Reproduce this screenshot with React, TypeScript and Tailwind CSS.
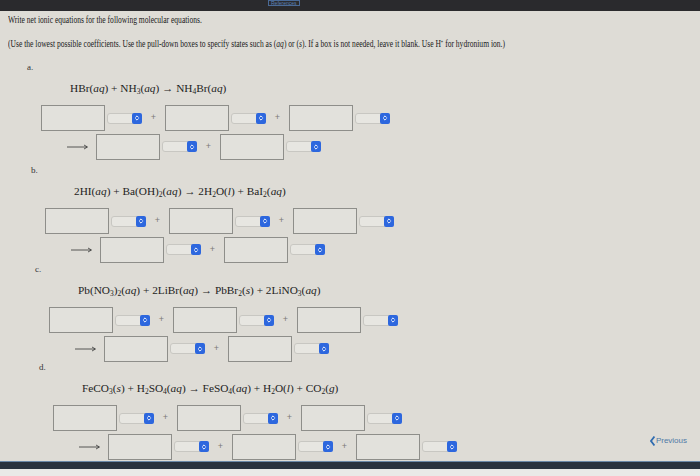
import React from "react";

const serif = "font-['Liberation_Serif','Times_New_Roman',serif]";

type Part = string | { sub: string } | { st: string };

const sections: { label: string; eq: Part[]; pad: string; gap: string }[] = [
  {
    label: "a.",
    pad: "pl-0",
    gap: "mt-0",
    eq: ["HBr", { st: "aq" }, " + NH", { sub: "3" }, { st: "aq" }, " → ", "NH", { sub: "4" }, "Br", { st: "aq" }],
  },
  {
    label: "b.",
    pad: "pl-[4px]",
    gap: "mt-[5px]",
    eq: [
      "2HI", { st: "aq" }, " + Ba(OH)", { sub: "2" }, { st: "aq" }, " → ", "2H", { sub: "2" }, "O", { st: "l" },
      " + BaI", { sub: "2" }, { st: "aq" },
    ],
  },
  {
    label: "c.",
    pad: "pl-[8px]",
    gap: "mt-[1px]",
    eq: [
      "Pb(NO", { sub: "3" }, ")", { sub: "2" }, { st: "aq" }, " + 2LiBr", { st: "aq" }, " → ", "PbBr", { sub: "2" },
      { st: "s" }, " + 2LiNO", { sub: "3" }, { st: "aq" },
    ],
  },
  {
    label: "d.",
    pad: "pl-[12px]",
    gap: "mt-0",
    eq: [
      "FeCO", { sub: "3" }, { st: "s" }, " + H", { sub: "2" }, "SO", { sub: "4" }, { st: "aq" }, " → ", "FeSO",
      { sub: "4" }, { st: "aq" }, " + H", { sub: "2" }, "O", { st: "l" }, " + CO", { sub: "2" }, { st: "g" },
    ],
  },
];

function Equation({ parts }: { parts: Part[] }) {
  return (
    <div className={`${serif} h-[14px] text-[11.3px] leading-[14px] text-[#222] whitespace-pre`}>
      {parts.map((p, i) => {
        if (typeof p === "string") return <span key={i}>{p}</span>;
        if ("sub" in p)
          return (
            <span key={i} className="relative top-[2px] text-[7.5px]">
              {p.sub}
            </span>
          );
        return (
          <span key={i}>
            (<span className="italic">{p.st}</span>)
          </span>
        );
      })}
    </div>
  );
}

function Box() {
  return <div className="h-[26px] w-[64px] shrink-0 border border-[#8e8e8a] bg-[#e2e1dc]" />;
}

function Select() {
  return (
    <div className="ml-[2px] flex h-[11px] w-[35px] shrink-0 items-center justify-end rounded-[3px] border border-[#c8c7c2] bg-[#e7e6e1]">
      <div className="-mr-px flex h-[11px] w-[10px] items-center justify-center rounded-[2px] bg-[#2d67de]">
        <svg width="6" height="8" viewBox="0 0 6 8" fill="none" stroke="white" strokeWidth="0.9" strokeLinecap="round">
          <path d="M1.6 3.3 L3 1.9 L4.4 3.3" />
          <path d="M1.6 4.7 L3 6.1 L4.4 4.7" />
        </svg>
      </div>
    </div>
  );
}

function Plus() {
  return (
    <span className="w-[23px] shrink-0 text-center font-['Liberation_Sans',sans-serif] text-[9px] text-[#7a7a76]">
      +
    </span>
  );
}

function Terms({ n }: { n: number }) {
  return (
    <>
      {Array.from({ length: n }).map((_, i) => (
        <React.Fragment key={i}>
          {i > 0 && <Plus />}
          <Box />
          <Select />
        </React.Fragment>
      ))}
    </>
  );
}

function Arrow() {
  return (
    <svg width="21" height="6" viewBox="0 0 21 6" className="mr-[8px] shrink-0">
      <line x1="0" y1="3" x2="20" y2="3" stroke="#333" strokeWidth="0.8" />
      <path d="M17 1 L20.5 3 L17 5" fill="none" stroke="#333" strokeWidth="0.8" />
    </svg>
  );
}

export default function App() {
  return (
    <div className="flex h-[476px] w-[700px] flex-col overflow-hidden bg-[#dedcd6]">
      <div className="flex h-[11px] shrink-0 bg-[#2a2a2d]">
        <span className="ml-[268px] h-[6px] border border-[#4a6a96] px-[2px] font-['Liberation_Sans',sans-serif] text-[5px] leading-[5px] text-[#5b82b8]">
          References
        </span>
      </div>

      <div className={`${serif} ml-[8px] mt-[2px] h-[12px] origin-left scale-x-[0.7] whitespace-nowrap text-[10.8px] leading-[12px] text-[#1a1a1a]`}>
        Write net ionic equations for the following molecular equations.
      </div>
      <div className={`${serif} ml-[8px] mt-[12px] h-[12px] origin-left scale-x-[0.7] whitespace-nowrap text-[10.8px] leading-[12px] text-[#1a1a1a]`}>
        (Use the lowest possible coefficients. Use the pull-down boxes to specify states such as (<i>aq</i>) or (
        <i>s</i>). If a box is not needed, leave it blank. Use H<sup className="text-[6px]">+</sup> for hydronium ion.)
      </div>

      <div className="mt-[12px] flex flex-col">
        {sections.map((s, idx) => (
          <div key={s.label} className={`${s.pad} ${s.gap} flex flex-col`}>
            <div className={`${serif} ml-[27px] h-[12px] text-[9px] leading-[12px] text-[#333]`}>{s.label}</div>
            <div className="ml-[70px] mt-[8px]">
              <Equation parts={s.eq} />
            </div>
            <div className="ml-[41px] mt-[10px] flex h-[26px] items-center">
              <Terms n={3} />
            </div>
            <div className="ml-[67px] mt-[3px] flex h-[25px] items-center">
              <Arrow />
              <Terms n={idx === 3 ? 3 : 2} />
              {idx === 3 && (
                <div className="ml-auto mr-[13px] mt-[1px] flex items-center self-start font-['Liberation_Sans',sans-serif]">
                  <svg width="5" height="10" viewBox="0 0 5 10">
                    <path d="M4.5 0.5 L1 5 L4.5 9.5" fill="none" stroke="#2f6cb0" strokeWidth="1.8" />
                  </svg>
                  <span className="ml-[1px] text-[8px] text-[#4f7aa6]">Previous</span>
                </div>
              )}
            </div>
          </div>
        ))}
      </div>

      <div className="mt-auto h-[8px] shrink-0 border-t border-[#6a88a8] bg-[#2a333f]" />
      <div className="h-[7px] shrink-0 bg-[#e9e9e7]" />
    </div>
  );
}
